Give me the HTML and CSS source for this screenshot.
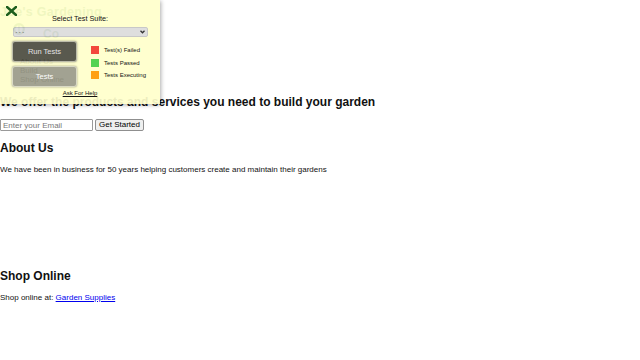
FILE: index.html
```html
<!DOCTYPE html>
<html lang="en">
<head>
<meta charset="utf-8">
<title>Joe's Gardening</title>
<link rel="stylesheet" href="styles.css">
</head>
<body>
<header class="site-header">
  <h1 class="brand">Joe's Gardening</h1>
  <div class="logo-row">
    <svg class="logo" width="12" height="14" viewBox="0 0 12 14"><circle cx="6" cy="7" r="4.8" fill="none" stroke="#3d8f2a" stroke-width="2.2"/><path d="M6 2 V12" stroke="#3d8f2a" stroke-width="1.2"/></svg>
    <span class="co">Co</span>
  </div>
  <ul class="nav">
    <li>About Us</li>
    <li>Build</li>
    <li>Shop Online</li>
  </ul>
</header>
<main class="content">
  <h2 class="heading">We offer the products and services you need to build your garden</h2>
  <form class="signup">
    <input class="email" type="email" placeholder="Enter your Email">
    <button class="start" type="button">Get Started</button>
  </form>
  <h2 class="heading">About Us</h2>
  <p class="text">We have been in business for 50 years helping customers create and maintain their gardens</p>
  <div class="media-space"></div>
  <h2 class="heading">Shop Online</h2>
  <p class="text">Shop online at: <a href="#">Garden Supplies</a></p>
</main>

<div class="fcc-panel">
  <div class="suite-label">Select Test Suite:</div>
  <div class="suite-select">
    <span class="sel-text">- - -</span>
    <svg class="chev" width="5" height="4" viewBox="0 0 5 4"><path d="M0.5 0.8 L2.5 2.8 L4.5 0.8" fill="none" stroke="#222" stroke-width="1.3"/></svg>
  </div>
  <div class="panel-body">
    <div class="btn-col">
      <button class="fcc-btn run" type="button">Run Tests</button>
      <button class="fcc-btn tests" type="button">Tests</button>
    </div>
    <ul class="legend">
      <li><span class="swatch red"></span>Test(s) Failed</li>
      <li><span class="swatch green"></span>Tests Passed</li>
      <li><span class="swatch orange"></span>Tests Executing</li>
    </ul>
  </div>
  <a class="help" href="#">Ask For Help</a>
</div>
<svg class="toggler" width="11" height="10" viewBox="0 0 11 10"><path d="M1 1 L10 9 M10 1 L1 9" stroke="#1d5e1d" stroke-width="2.5" stroke-linecap="square"/></svg>
</body>
</html>
```
FILE: styles.css
```css
html, body {
  margin: 0;
  padding: 0;
  background: #ffffff;
}
body {
  font-family: "Liberation Sans", Arial, sans-serif;
  color: #000;
}
.site-header {
  padding-bottom: 1px;
}
.brand {
  margin: 5px 0 0;
  font-size: 12.5px;
  line-height: 15px;
  letter-spacing: 0.3px;
  color: #3d8f2a;
  font-weight: bold;
}
.logo-row {
  display: flex;
  align-items: flex-start;
  height: 20px;
  padding-left: 13px;
  gap: 18px;
}
.logo {
  margin-top: 2px;
}
.co {
  margin-top: 8px;
  font-size: 12px;
  line-height: 12px;
  font-weight: bold;
  color: #3d8f2a;
}
.nav {
  list-style: none;
  margin: 17px 0 0;
  padding-left: 20px;
  font-size: 8px;
  line-height: 9px;
  color: #222;
}
.content {
  display: block;
}
.heading {
  margin: 10px 0;
  font-size: 12px;
  line-height: 14px;
  font-weight: bold;
  color: #111;
}
.signup {
  display: flex;
  gap: 2px;
  margin: 0;
  height: 12px;
}
.email {
  box-sizing: border-box;
  width: 93px;
  height: 12px;
  margin: 0;
  padding: 0 2px;
  border: 1px solid #9a9a9a;
  border-radius: 1px;
  font-family: "Liberation Sans", Arial, sans-serif;
  font-size: 8px;
  background: #fff;
}
.email::placeholder {
  color: #777;
}
.start {
  box-sizing: border-box;
  width: 49px;
  height: 12px;
  margin: 0;
  padding: 0;
  border: 1px solid #8f8f8f;
  border-radius: 2px;
  background: #efefef;
  font-family: "Liberation Sans", Arial, sans-serif;
  font-size: 8px;
  line-height: 10px;
  color: #000;
}
.text {
  margin: 8px 0;
  font-size: 8px;
  line-height: 9px;
  color: #111;
}
.text a {
  color: #0000ee;
}
.media-space {
  height: 77px;
}

/* test suite panel */
.fcc-panel {
  position: absolute;
  left: 0;
  top: 0;
  box-sizing: border-box;
  width: 160px;
  height: 104px;
  padding-top: 14px;
  background: #ffffcc;
  opacity: 0.92;
  box-shadow: 1px 1px 4px rgba(0, 0, 0, 0.35);
  display: flex;
  flex-direction: column;
  align-items: center;
  font-family: "Liberation Sans", Arial, sans-serif;
}
.suite-label {
  font-size: 7.3px;
  line-height: 9px;
  color: #000;
}
.suite-select {
  box-sizing: border-box;
  margin-top: 4px;
  width: 135px;
  height: 10px;
  border-radius: 2px;
  border: 1px solid #c4c4c4;
  background: #dcdcdc;
  display: flex;
  align-items: center;
  justify-content: space-between;
  padding: 0 2px 0 2px;
}
.sel-text {
  font-size: 5.5px;
  line-height: 6px;
  color: #333;
}
.panel-body {
  align-self: stretch;
  display: flex;
  padding-left: 12px;
  margin-top: 4px;
  gap: 14px;
}
.btn-col {
  display: flex;
  flex-direction: column;
  gap: 4px;
}
.fcc-btn {
  box-sizing: border-box;
  width: 65px;
  height: 21px;
  margin: 0;
  padding: 0;
  border: 1px solid rgba(255, 255, 230, 0.6);
  border-radius: 3px;
  box-shadow: 0 0 2px rgba(60, 60, 40, 0.6);
  font-family: "Liberation Sans", Arial, sans-serif;
  font-size: 7.5px;
  color: #fff;
}
.run {
  background: #4c4c40;
  color: #e0e0e0;
}
.tests {
  background: #9b9b89;
}
.legend {
  list-style: none;
  margin: 5px 0 0;
  padding: 0;
  display: flex;
  flex-direction: column;
  gap: 4.5px;
  font-size: 6px;
  line-height: 8px;
  color: #000;
}
.legend li {
  display: flex;
  align-items: center;
  gap: 5px;
}
.swatch {
  width: 8px;
  height: 8px;
  display: block;
}
.red { background: #f33a2c; }
.green { background: #44d044; }
.orange { background: #ff9a00; }
.help {
  margin-top: auto;
  margin-bottom: 7px;
  font-size: 6px;
  line-height: 7px;
  color: #000;
  text-decoration: underline;
}
.toggler {
  position: absolute;
  left: 6px;
  top: 6px;
}
```
